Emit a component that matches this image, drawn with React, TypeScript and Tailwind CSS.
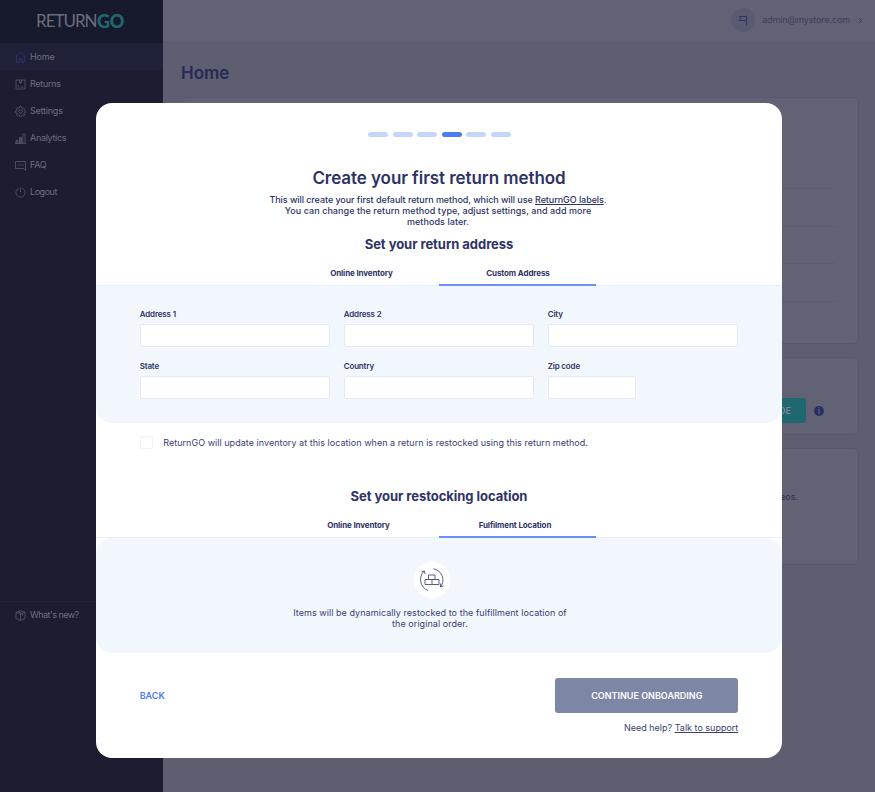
import type { ReactNode } from "react";

const NAV = [
  { label: "Home", icon: <HomeIcon />, active: true, tracking: "tracking-[-0.02em]" },
  { label: "Returns", icon: <ReturnsIcon />, tracking: "tracking-[-0.035em]" },
  { label: "Settings", icon: <GearIcon />, tracking: "tracking-[-0.025em]" },
  { label: "Analytics", icon: <ChartIcon />, tracking: "tracking-[-0.035em]" },
  { label: "FAQ", icon: <ChatIcon />, tracking: "tracking-[-0.04em]" },
  { label: "Logout", icon: <PowerIcon />, tracking: "tracking-[-0.05em]" },
];

function Icon({ children }: { children: ReactNode }) {
  return (
    <svg width="11" height="11" viewBox="0 0 22 22" fill="none" stroke="currentColor" strokeWidth="1.5">
      {children}
    </svg>
  );
}

function HomeIcon() {
  return (
    <Icon>
      <path d="M1 9.5 11 1l10 8.5M3.5 8v13h5v-8h5v8h5V8" />
    </Icon>
  );
}

function ReturnsIcon() {
  return (
    <Icon>
      <path d="M2 2h18v18H2zM9 2v5h4V2M5 16h3M11 16h6M7 12l-2 2M9 7l2 2 2-2" />
    </Icon>
  );
}

function GearIcon() {
  return (
    <Icon>
      <circle cx="11" cy="11" r="3.5" />
      <path d="m9.3 1-.6 2.9-2 .9L4.1 3.3 2.6 5.5l1.700 2.400-.8 2L1 10.500v2.500l2.700.7.8 1.800-1.600 2.500 1.900 1.800 2.500-1.600 1.900.8.6 2.800h2.700l.7-2.800 1.900-.8 2.400 1.500 1.900-1.800-1.600-2.500.8-1.900 2.700-.7v-2.500l-2.700-.7-.8-1.900 1.600-2.400-1.800-1.900-2.500 1.600-2-.8L12.400 1z" />
    </Icon>
  );
}

function ChartIcon() {
  return (
    <Icon>
      <path d="M0 21h22M2 21v-6h4v6M9 21V9h4v12M15.5 21V2H20v19M4 15v6M11 9v12" />
    </Icon>
  );
}

function ChatIcon() {
  return (
    <Icon>
      <path d="M1 3h20v18l-4-4H1zM5 10h3M9.5 10h3M14 10h3" />
    </Icon>
  );
}

function PowerIcon() {
  return (
    <Icon>
      <path d="M7.5 2.6a9.2 9.2 0 1 0 7 0M11 1v9" />
    </Icon>
  );
}

function BoxIcon() {
  return (
    <Icon>
      <path d="m2 5 8-3.500L20 4v13l-9 4-9-4zM2 5l9 3.500L20 4M11 8.500V21M6 3.500l9 3.500v4" />
    </Icon>
  );
}

function Sidebar() {
  return (
    <aside className="flex w-[163px] shrink-0 flex-col bg-[#1c1d31] text-[#6d6e80]">
      <div className="flex h-[43px] items-center bg-[#17192d] pb-[2px] pl-[36px] font-['Lato',sans-serif] text-[18px] leading-none text-[#6c6d7e]">
        <span className="w-[61px] text-[17px] tracking-[-0.06em]">RETURN</span>
        <span className="font-black tracking-[-0.01em] text-[#20696f]">GO</span>
      </div>
      <nav className="flex flex-col">
        {NAV.map((item) => (
          <a
            key={item.label}
            className={`flex h-[27px] items-center gap-1 pt-px pl-[15px] text-[9px] ${item.active ? "bg-[#1f2138]" : ""}`}
          >
            <span className={item.active ? "text-[#303e78]" : "text-[#5b5c6e]"}>{item.icon}</span>
            <span className={item.tracking}>{item.label}</span>
          </a>
        ))}
      </nav>
      <div className="mt-[396px] flex h-[27px] items-center gap-1 border-t border-[#222339] pl-[15px] text-[9px]">
        <span className="text-[#5b5c6e]">
          <BoxIcon />
        </span>
        <span className="tracking-[-0.06em]">What's new?</span>
      </div>
    </aside>
  );
}

function Backdrop() {
  return (
    <div className="flex h-[792px] w-[875px] overflow-hidden bg-[#5d5e70]">
      <Sidebar />
      <main className="flex grow flex-col">
        <header className="flex h-[43px] items-center justify-end border-b border-[#5a5b6f] bg-[#616274] pr-[12px] pb-[2px]">
          <span className="flex size-[24px] items-center justify-center rounded-full bg-[#595b73] text-[#30355f]">
            <svg width="9" height="11" viewBox="0 0 9 11" fill="none" stroke="currentColor">
              <path d="M7.5 .5v10M7.5 1.5H.5l1 2-1 2h7" />
            </svg>
          </span>
          <span className="ml-[7px] text-[9px] tracking-[-0.014em] text-[#3c3f61]">admin@mystore.com</span>
          <svg className="ml-[8px]" width="5" height="7" viewBox="0 0 5 7" fill="none" stroke="#3c3f61">
            <path d="m1 1 2.500 2.500L1 6" />
          </svg>
        </header>
        <div className="flex flex-col pr-[16px] pl-[18px]">
          <h1 className="mt-[18px] mb-[12px] text-[17px] leading-6 font-semibold text-[#262a54]">Home</h1>
          <section className="flex h-[247px] flex-col gap-[36.5px] rounded-md border border-[#565870] bg-[#616274] pt-[90px] pr-[22px]">
            <div className="border-t border-[#5c5d70]" />
            <div className="border-t border-[#5c5d70]" />
            <div className="border-t border-[#5c5d70]" />
            <div className="border-t border-[#5c5d70]" />
          </section>
          <section className="mt-[13px] flex h-[78px] items-start justify-end rounded-md border border-[#565870] bg-[#616274] pt-[40px] pr-[34px]">
            <span className="flex h-[25px] w-[90px] items-center justify-end rounded-[3px] bg-[#1f686f] pr-[15px] text-[9px] font-semibold text-[#7b8996]">
              UPGRADE
            </span>
            <span className="mt-[8px] ml-[8px] flex size-[10px] items-center justify-center rounded-full bg-[#292f63] text-[8px] leading-none text-[#777990]">
              i
            </span>
          </section>
          <section className="mt-[13px] flex h-[117px] justify-end rounded-md border border-[#565870] bg-[#616274] pt-[41px] pr-[60px] text-[9px] text-[#30334e]">
            videos.
          </section>
        </div>
      </main>
    </div>
  );
}

function Steps() {
  return (
    <div className="flex justify-center gap-[4.6px] pt-[29px] pl-px">
      {[0, 1, 2, 3, 4, 5].map((step) => (
        <span key={step} className={`h-[5px] w-[20px] rounded-full ${step === 3 ? "bg-[#4d7bf3]" : "bg-[#c6d5fc]"}`} />
      ))}
    </div>
  );
}

function Tabs({ active, nudge = "" }: { active: string; nudge?: string }) {
  return (
    <div className="flex h-[26px] justify-center border-b border-[#e8eef8] pl-[2px] text-[8px] leading-[27px] font-bold tracking-[-0.015em]">
      <span className={`w-[156px] text-center ${nudge}`}>Online Inventory</span>
      <span className="-mb-px h-[26px] w-[157px] border-b-2 border-[#6a8ff8] text-center">
        <span className={nudge}>{active}</span>
      </span>
    </div>
  );
}

function Field({ label, width = "w-full" }: { label: string; width?: string }) {
  return (
    <label className="flex flex-col text-[8px] leading-[12px] font-semibold tracking-[-0.02em]">
      {label}
      <input className={`mt-[4px] h-[23px] rounded-[2px] border border-[#e4e9f9] bg-white ${width}`} />
    </label>
  );
}

function RestockIcon() {
  return (
    <svg width="26" height="26" viewBox="0 0 26 26" fill="none" stroke="#4a4e78" strokeWidth="0.9">
      <path d="M9 23.5A11.5 11.5 0 0 1 5 4.500M2.500 5 5.500 4l.5 3M14.500 1.800A11.500 11.500 0 0 1 22 19.500M21.500 16.500v3.500l3-1" />
      <path d="M6 12.5h14v5H6zM13 12.5v5M9.5 8h6.500v4.500H9.500z" />
    </svg>
  );
}

function OnboardingModal() {
  return (
    <div className="absolute top-[103.4px] left-[95.7px] flex h-[654.4px] w-[686.6px] flex-col rounded-[16px] bg-white text-[#2e3366]">
      <Steps />
      <h2 className="mt-[29px] text-center text-[17px] leading-6 font-semibold tracking-[-0.004em]">
        Create your first return method
      </h2>
      <p className="mt-[4px] pr-[2px] text-center text-[9px] leading-[11px] font-medium">
        <span className="tracking-[-0.066px]">
          This will create your first default return method, which will use <a className="underline">ReturnGO labels</a>.
        </span>
        <br />
        <span className="tracking-[0.06px]">You can change the return method type, adjust settings, and add more</span>
        <br />
        <span className="tracking-[0.06px]">methods later.</span>
      </p>
      <h3 className="mt-[7px] text-center text-[13px] leading-[20px] font-bold tracking-[-0.003em]">
        Set your return address
      </h3>
      <div className="mt-[6px]">
        <Tabs active="Custom Address" />
      </div>
      <div className="grid h-[137px] grid-cols-[190px_190px_190px] content-start gap-x-[14px] gap-y-[13px] rounded-b-[16px] bg-[#f2f7fe] pt-[22px] pl-[44px]">
        <Field label="Address 1" />
        <Field label="Address 2" />
        <Field label="City" />
        <Field label="State" />
        <Field label="Country" />
        <Field label="Zip code" width="w-[88px]" />
      </div>
      <div className="mt-[13px] flex h-[13px] items-center gap-[10.5px] pl-[44px] text-[9px] tracking-[0.035px] text-[#3a3e70]">
        <span className="size-[13px] rounded-[2px] border border-[#f0f2fa]" />
        <span>ReturnGO will update inventory at this location when a return is restocked using this return method.</span>
      </div>
      <h3 className="mt-[37px] text-center text-[13px] leading-[20px] font-bold tracking-[-0.003em]">
        Set your restocking location
      </h3>
      <div className="mt-[6px]">
        <Tabs active="Fulfilment Location" nudge="relative -left-[3px]" />
      </div>
      <div className="flex h-[115px] flex-col items-center rounded-[16px] bg-[#f2f7fe] pt-[24px] pr-[14px]">
        <span className="flex size-[36px] items-center justify-center rounded-full bg-white">
          <RestockIcon />
        </span>
        <p className="mt-[9px] pr-[4px] text-center text-[9px] leading-[11px] tracking-[0.055px] text-[#3a3e70]">
          Items will be dynamically restocked to the fulfillment location of
          <br />
          the original order.
        </p>
      </div>
      <div className="mt-[25px] flex items-center justify-between pr-[44px] pl-[44px] text-[9px] font-semibold">
        <a className="text-[#4d7bf3]">BACK</a>
        <button className="h-[35px] w-[183px] rounded-[3px] bg-[#7e86a6] text-white">CONTINUE ONBOARDING</button>
      </div>
      <p className="mt-[8px] pr-[44px] text-right text-[9px] leading-[13px] text-[#3a3e70]">
        Need help? <a className="underline">Talk to support</a>
      </p>
    </div>
  );
}

export default function App() {
  return (
    <div className="relative h-[792px] w-[875px] overflow-hidden font-['Inter',sans-serif]">
      <Backdrop />
      <OnboardingModal />
    </div>
  );
}
